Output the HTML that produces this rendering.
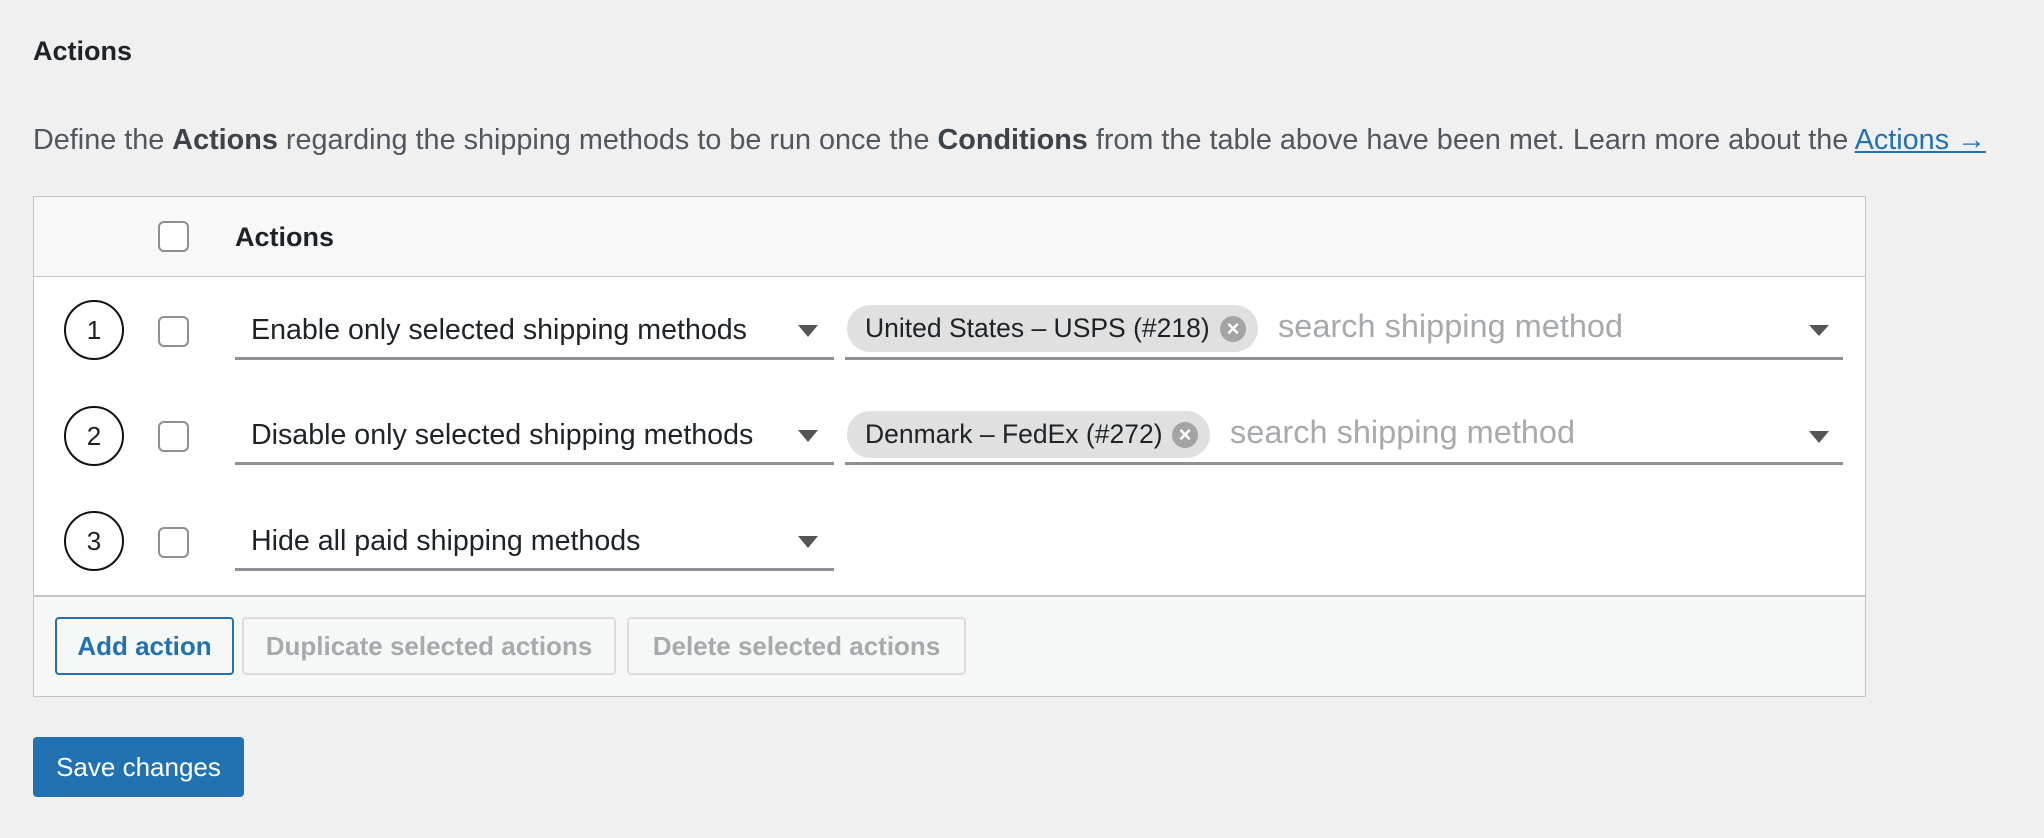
<!DOCTYPE html>
<html><head><style>
*{box-sizing:border-box;margin:0;padding:0}
body{width:2044px;height:838px;background:#f0f0f1;font-family:"Liberation Sans",Arial,sans-serif;position:relative;overflow:hidden;color:#1d2327}
.a{position:absolute;white-space:nowrap}
h2{position:absolute;left:33px;top:36px;font-size:27px;font-weight:bold;color:#1d2327}
.desc{left:33px;top:124px;font-size:28.8px;color:#50575e}
.desc b{color:#3c434a}
.desc a{color:#2271b1;text-decoration:underline}
.tbl{position:absolute;left:33px;top:196px;width:1833px;height:501px;border:1px solid #c3c4c7;background:#fff}
.hdr{position:absolute;left:0;top:0;width:100%;height:80px;background:#f8f8f8;border-bottom:1px solid #c3c4c7}
.ftr{position:absolute;left:0;top:398px;width:100%;height:101px;background:#f6f7f7;border-top:2px solid #c3c4c7}
.cb{position:absolute;width:31px;height:31px;border:2px solid #8c8f94;border-radius:6px;background:#fff}
.num{position:absolute;width:60px;height:60px;border:2px solid #111;border-radius:50%;font-size:26px;text-align:center;line-height:56px;color:#222;background:#fff}
.sel{position:absolute;height:50px;border-bottom:3px solid #8c8f94;font-size:28.6px;color:#1d2327}
.sel span{position:absolute;left:16px;top:4px}
.arr{position:absolute;width:0;height:0;border-left:10px solid transparent;border-right:10px solid transparent;border-top:12px solid #555}
.chip{position:absolute;height:47px;border-radius:24px;background:#e0e0e0;font-size:26.5px;color:#1d2327;padding-left:18px;line-height:47px}
.x{position:absolute;top:11px;width:26px;height:26px;border-radius:50%;background:#a4a4a4;color:#fff;font-size:22px;line-height:25px;text-align:center;font-weight:bold}
.ph{position:absolute;font-size:32.5px;color:#a7aaad}
.btn{position:absolute;top:617px;height:58px;border:2px solid #dcdcde;border-radius:4px;background:#f6f7f7;color:#a7aaad;font-size:26px;font-weight:bold;text-align:center;line-height:54px}
</style></head><body>
<h2>Actions</h2>
<div class="a desc">Define the <b>Actions</b> regarding the shipping methods to be run once the <b>Conditions</b> from the table above have been met. Learn more about the <a>Actions →</a></div>
<div class="tbl">
 <div class="hdr"></div>
 <div class="ftr"></div>
</div>
<div class="cb" style="left:158px;top:221px"></div>
<div class="a" style="left:235px;top:222px;font-size:27px;font-weight:bold;color:#1d2327">Actions</div>

<div class="num" style="left:64px;top:300px">1</div>
<div class="cb" style="left:158px;top:316px"></div>
<div class="sel" style="left:235px;top:310px;width:599px"><span>Enable only selected shipping methods</span></div>
<div class="arr" style="left:798px;top:325px"></div>
<div class="sel" style="left:845px;top:310px;width:998px"></div>
<div class="chip" style="left:847px;top:305px;width:411px">United States – USPS (#218)<div class="x" style="left:373px">×</div></div>
<div class="ph" style="left:1278px;top:308px">search shipping method</div>
<div class="arr" style="left:1809px;top:325px;border-top-width:11px"></div>

<div class="num" style="left:64px;top:406px">2</div>
<div class="cb" style="left:158px;top:421px"></div>
<div class="sel" style="left:235px;top:415px;width:599px"><span>Disable only selected shipping methods</span></div>
<div class="arr" style="left:798px;top:430px"></div>
<div class="sel" style="left:845px;top:415px;width:998px"></div>
<div class="chip" style="left:847px;top:411px;width:363px">Denmark – FedEx (#272)<div class="x" style="left:325px">×</div></div>
<div class="ph" style="left:1230px;top:414px">search shipping method</div>
<div class="arr" style="left:1809px;top:431px"></div>

<div class="num" style="left:64px;top:511px">3</div>
<div class="cb" style="left:158px;top:527px"></div>
<div class="sel" style="left:235px;top:521px;width:599px"><span>Hide all paid shipping methods</span></div>
<div class="arr" style="left:798px;top:536px"></div>

<div class="btn" style="left:55px;width:179px;border-color:#2271b1;background:#f6f7f7;color:#2271b1">Add action</div>
<div class="btn" style="left:242px;width:374px">Duplicate selected actions</div>
<div class="btn" style="left:627px;width:339px">Delete selected actions</div>

<div class="a" style="left:33px;top:737px;width:211px;height:60px;background:#2271b1;border-radius:4px;color:#fff;font-size:26px;text-align:center;line-height:60px">Save changes</div>
</body></html>
